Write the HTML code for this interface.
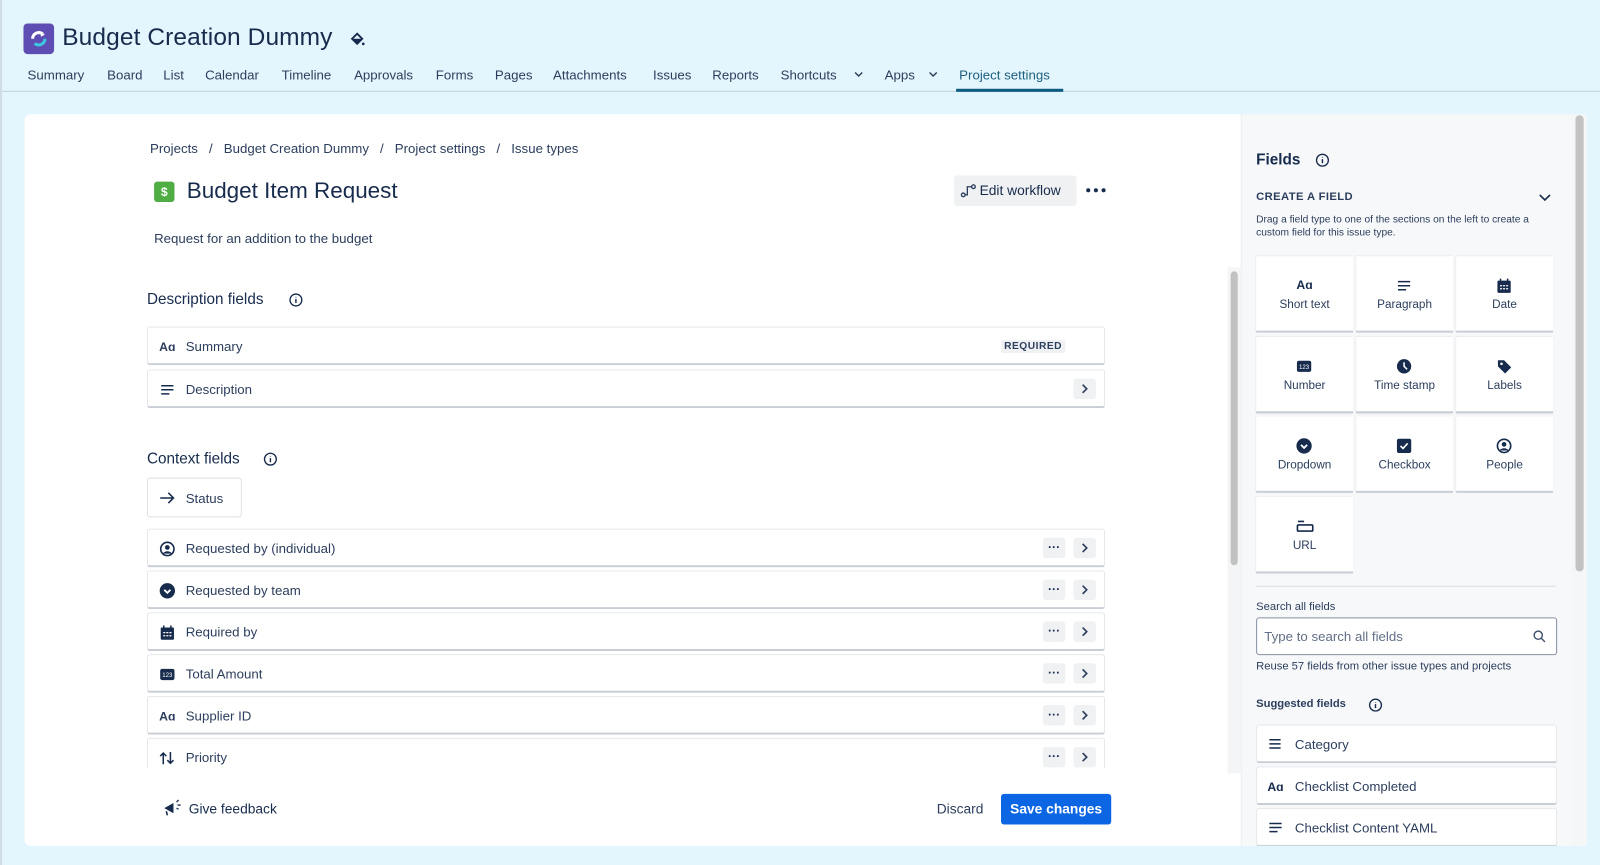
<!DOCTYPE html>
<html><head><meta charset="utf-8"><style>
*{box-sizing:border-box;margin:0;padding:0}
html,body{width:1600px;height:848px;overflow:hidden;background:#e4f6fd}
body{font-family:"Liberation Sans",sans-serif;color:#172b4d}
#w{position:absolute;left:0;top:0;width:1568px;height:831px;transform:scale(1.0204);transform-origin:0 0}
.abs{position:absolute}
.nav span{position:absolute;top:66px;font-size:13px;color:#2c3e5d}
.row{position:absolute;left:144px;width:939px;height:38px;background:#fff;border:1px solid #e4e6ea;border-bottom:2px solid #c9ced6;border-radius:3px;font-size:13px;color:#2c3e5d}
.row .ic{position:absolute;left:11px;top:11px;width:16px;height:16px}
.row .t{position:absolute;left:37px;top:11px}
.btn{position:absolute;top:8px;width:22px;height:20px;background:#f0f1f3;border-radius:3px;font-size:12px;text-align:center;line-height:18px;color:#172b4d;font-weight:bold}
.btn svg{margin-top:5px}
.tile{position:absolute;width:95px;height:75px;background:#fff;border-bottom:2px solid #c9ced6;box-shadow:0 0 1px #c9ced6;font-size:11.5px;color:#2c3e5d;text-align:center}
.tile svg{position:absolute;left:39px;top:21px}
.tile .l{position:absolute;left:0;right:0;top:42px}
.sug{position:absolute;left:1231px;width:295px;height:38px;background:#fff;border:1px solid #e4e6ea;border-bottom:2px solid #c9ced6;border-radius:3px;font-size:13px;color:#2c3e5d}
.sug .t{position:absolute;left:37px;top:11px}
</style></head><body><div id="w">
<div class="abs" style="left:23px;top:23px;width:30px;height:30px;background:#5e4db2;border-radius:4px"></div>
<svg class="abs" style="left:27px;top:27px" width="22" height="22" viewBox="0 0 22 22"><path d="M5 11a6 6 0 0 1 10-4.5" stroke="#fff" stroke-width="3" fill="none"/><path d="M17 11a6 6 0 0 1-10 4.5" stroke="#3fc6e0" stroke-width="3" fill="none"/><path d="M13 4l4 3-4 2z" fill="#fff"/></svg>
<div class="abs" style="left:61px;top:23px;font-size:24px;color:#172b4d;letter-spacing:.1px">Budget Creation Dummy</div>
<svg class="abs" style="left:342px;top:30px" width="16" height="16" viewBox="0 0 16 16"><path d="M3 8l5-5 5 5-5 5z" fill="none" stroke="#172b4d" stroke-width="1.8"/><path d="M3 8h10l-5 5z" fill="#172b4d"/><circle cx="14" cy="13" r="1.3" fill="#172b4d"/></svg>
<div class="nav">
<span style="left:27px">Summary</span><span style="left:105px">Board</span><span style="left:160px">List</span><span style="left:201px">Calendar</span><span style="left:276px">Timeline</span><span style="left:347px">Approvals</span><span style="left:427px">Forms</span><span style="left:485px">Pages</span><span style="left:542px">Attachments</span><span style="left:640px">Issues</span><span style="left:698px">Reports</span><span style="left:765px">Shortcuts</span><span style="left:867px">Apps</span><span style="left:940px;color:#1f5f7f">Project settings</span>
</div>
<svg class="abs" style="left:837px;top:70px" width="9" height="6"><path d="M1 1l3.5 3.5L8 1" fill="none" stroke="#2c3e5d" stroke-width="1.4"/></svg>
<svg class="abs" style="left:910px;top:70px" width="9" height="6"><path d="M1 1l3.5 3.5L8 1" fill="none" stroke="#2c3e5d" stroke-width="1.4"/></svg>
<div class="abs" style="left:0;top:89px;width:1600px;height:1px;background:#bfd3db"></div>
<div class="abs" style="left:937px;top:87px;width:105px;height:3px;background:#0c5b80"></div>
<div class="abs" style="left:0;top:0;width:2px;height:848px;background:#d0dde3"></div>

<div class="abs" style="left:24px;top:112px;width:1192px;height:717px;background:#fff;border-radius:6px 0 0 6px"></div>
<div class="abs" style="left:1216px;top:112px;width:324px;height:717px;background:#f7f8f9;border-left:1px solid #eceef0"></div>
<div class="abs" style="left:1540px;top:112px;width:15px;height:717px;background:#f5f6f7"></div>
<div class="abs" style="left:1544px;top:113px;width:8px;height:447px;background:#c2c2c2;border-radius:4px"></div>
<div class="abs" style="left:1203px;top:262px;width:13px;height:496px;background:#f4f5f6"></div>
<div class="abs" style="left:1206px;top:266px;width:7px;height:288px;background:#c2c2c2;border-radius:4px"></div>

<div class="abs" style="left:147px;top:138px;font-size:13px;color:#2c3e5d">Projects &nbsp;&nbsp;/&nbsp;&nbsp; Budget Creation Dummy &nbsp;&nbsp;/&nbsp;&nbsp; Project settings &nbsp;&nbsp;/&nbsp;&nbsp; Issue types</div>
<div class="abs" style="left:151px;top:178px;width:20px;height:20px;background:#4fad44;border-radius:3px;color:#fff;font-size:12px;font-weight:bold;text-align:center;line-height:20px">$</div>
<div class="abs" style="left:183px;top:174px;font-size:22px;color:#172b4d">Budget Item Request</div>
<div class="abs" style="left:935px;top:172px;width:120px;height:30px;background:#f0f1f3;border-radius:3px;font-size:13.5px;line-height:30px;padding-left:25px;color:#172b4d">Edit workflow</div>
<svg class="abs" style="left:941px;top:180px" width="16" height="14" viewBox="0 0 16 14"><circle cx="3" cy="11" r="1.8" fill="none" stroke="#2c3e5d" stroke-width="1.3"/><circle cx="13" cy="3" r="1.8" fill="none" stroke="#2c3e5d" stroke-width="1.3"/><path d="M4.5 11h2.5V3h4" fill="none" stroke="#2c3e5d" stroke-width="1.3"/></svg>
<svg class="abs" style="left:1064px;top:184px" width="20" height="5"><circle cx="2.5" cy="2.5" r="2" fill="#172b4d"/><circle cx="10" cy="2.5" r="2" fill="#172b4d"/><circle cx="17.5" cy="2.5" r="2" fill="#172b4d"/></svg>
<div class="abs" style="left:151px;top:226px;font-size:13px;color:#2c3e5d">Request for an addition to the budget</div>

<div class="abs" style="left:144px;top:285px;font-size:15px;color:#172b4d">Description fields</div>
<svg class="abs" style="left:283px;top:287px" width="14" height="14"><circle cx="7" cy="7" r="5.8" fill="none" stroke="#172b4d" stroke-width="1.3"/><path d="M7 6v4M7 4v.5" stroke="#172b4d" stroke-width="1.4"/></svg>
<div class="row" style="top:320px"><span class="ic" style="font-size:12px;font-weight:bold;top:12px">Aɑ</span><span class="t">Summary</span><span style="position:absolute;left:836px;top:12px;background:#f0f1f3;border-radius:2px;padding:1px 3px;font-size:10px;font-weight:bold;letter-spacing:.5px;color:#2c3e5d">REQUIRED</span></div>
<div class="row" style="top:362px"><svg class="ic" viewBox="0 0 16 16"><path d="M2 4h12M2 8h12M2 12h8" stroke="#172b4d" stroke-width="1.5"/></svg><span class="t">Description</span><span class="btn" style="left:907px"><svg width="8" height="10"><path d="M2 1l4 4-4 4" fill="none" stroke="#2c3e5d" stroke-width="1.6"/></svg></span></div>

<div class="abs" style="left:144px;top:441px;font-size:15px;color:#172b4d">Context fields</div>
<svg class="abs" style="left:258px;top:443px" width="14" height="14"><circle cx="7" cy="7" r="5.8" fill="none" stroke="#172b4d" stroke-width="1.3"/><path d="M7 6v4M7 4v.5" stroke="#172b4d" stroke-width="1.4"/></svg>
<div class="abs" style="left:144px;top:468px;width:93px;height:39px;border:1px solid #dfe1e5;border-radius:3px;font-size:13px;color:#2c3e5d"><svg style="position:absolute;left:11px;top:11px" width="16" height="16"><path d="M1 8h13M9 3l5 5-5 5" fill="none" stroke="#172b4d" stroke-width="1.5"/></svg><span style="position:absolute;left:37px;top:12px">Status</span></div>

<div style="position:absolute;left:0;top:0;width:1200px;height:753px;overflow:hidden">
<div class="row" style="top:518px"><svg class="ic" viewBox="0 0 16 16"><circle cx="8" cy="8" r="6.5" fill="none" stroke="#172b4d" stroke-width="1.6"/><circle cx="8" cy="6.5" r="2.3" fill="#172b4d"/><path d="M3.5 12.5c2-3 7-3 9 0" fill="#172b4d"/></svg><span class="t">Requested by (individual)</span><span class="btn" style="left:877px">···</span><span class="btn" style="left:907px"><svg width="8" height="10"><path d="M2 1l4 4-4 4" fill="none" stroke="#2c3e5d" stroke-width="1.6"/></svg></span></div>
<div class="row" style="top:559px"><svg class="ic" viewBox="0 0 16 16"><circle cx="8" cy="8" r="7.5" fill="#172b4d"/><path d="M5 7l3 3 3-3" fill="none" stroke="#fff" stroke-width="1.8"/></svg><span class="t">Requested by team</span><span class="btn" style="left:877px">···</span><span class="btn" style="left:907px"><svg width="8" height="10"><path d="M2 1l4 4-4 4" fill="none" stroke="#2c3e5d" stroke-width="1.6"/></svg></span></div>
<div class="row" style="top:600px"><svg class="ic" viewBox="0 0 16 16"><rect x="1.5" y="3" width="13" height="12" rx="1" fill="#172b4d"/><path d="M4.5 1v3M11.5 1v3" stroke="#172b4d" stroke-width="1.5"/><path d="M4 8h2M7 8h2M10 8h2M4 11h2M7 11h2M10 11h2" stroke="#fff" stroke-width="1.2"/></svg><span class="t">Required by</span><span class="btn" style="left:877px">···</span><span class="btn" style="left:907px"><svg width="8" height="10"><path d="M2 1l4 4-4 4" fill="none" stroke="#2c3e5d" stroke-width="1.6"/></svg></span></div>
<div class="row" style="top:641px"><svg class="ic" viewBox="0 0 16 16"><rect x="1" y="2.5" width="14" height="11" rx="2" fill="#172b4d"/><text x="8" y="10.5" font-size="6" fill="#fff" text-anchor="middle" font-family="Liberation Sans">123</text></svg><span class="t">Total Amount</span><span class="btn" style="left:877px">···</span><span class="btn" style="left:907px"><svg width="8" height="10"><path d="M2 1l4 4-4 4" fill="none" stroke="#2c3e5d" stroke-width="1.6"/></svg></span></div>
<div class="row" style="top:682px"><span class="ic" style="font-size:12px;font-weight:bold;top:12px">Aɑ</span><span class="t">Supplier ID</span><span class="btn" style="left:877px">···</span><span class="btn" style="left:907px"><svg width="8" height="10"><path d="M2 1l4 4-4 4" fill="none" stroke="#2c3e5d" stroke-width="1.6"/></svg></span></div>
<div class="row" style="top:723px"><svg class="ic" viewBox="0 0 16 16"><path d="M4 14V3M1 6l3-3 3 3M11 2v11M8 10l3 3 3-3" fill="none" stroke="#172b4d" stroke-width="1.5"/></svg><span class="t">Priority</span><span class="btn" style="left:877px">···</span><span class="btn" style="left:907px"><svg width="8" height="10"><path d="M2 1l4 4-4 4" fill="none" stroke="#2c3e5d" stroke-width="1.6"/></svg></span></div>
</div>

<svg class="abs" style="left:159px;top:783px" width="20" height="18" viewBox="0 0 20 18"><path d="M2 9l9-5v10z" fill="#172b4d"/><path d="M4 12l1 4" stroke="#172b4d" stroke-width="1.5"/><path d="M14 3l2-2M15 6h3M14 9l2 1" stroke="#172b4d" stroke-width="1.3"/></svg>
<div class="abs" style="left:185px;top:785px;font-size:13.5px;color:#172b4d">Give feedback</div>
<div class="abs" style="left:918px;top:785px;font-size:13.5px;color:#2c3e5d">Discard</div>
<div class="abs" style="left:981px;top:778px;width:108px;height:30px;background:#0c66e4;border-radius:3px;color:#fff;font-size:13.5px;font-weight:bold;text-align:center;line-height:30px">Save changes</div>

<div class="abs" style="left:1231px;top:148px;font-size:15px;font-weight:bold;color:#172b4d">Fields</div>
<svg class="abs" style="left:1289px;top:150px" width="14" height="14"><circle cx="7" cy="7" r="5.8" fill="none" stroke="#172b4d" stroke-width="1.3"/><path d="M7 6v4M7 4v.5" stroke="#172b4d" stroke-width="1.4"/></svg>
<div class="abs" style="left:1231px;top:187px;font-size:11px;font-weight:bold;color:#2c3e5d;letter-spacing:.4px">CREATE A FIELD</div>
<svg class="abs" style="left:1508px;top:189px" width="12" height="9"><path d="M1 2l5 5 5-5" fill="none" stroke="#172b4d" stroke-width="1.6"/></svg>
<div class="abs" style="left:1231px;top:209px;width:300px;font-size:10px;line-height:13px;color:#2c3e5d">Drag a field type to one of the sections on the left to create a custom field for this issue type.</div>

<div class="tile" style="left:1231px;top:251px"><span style="position:absolute;left:0;right:0;top:21px;font-size:12px;font-weight:bold;color:#172b4d">Aɑ</span><span class="l">Short text</span></div>
<div class="tile" style="left:1329px;top:251px"><svg width="16" height="16" viewBox="0 0 16 16"><path d="M2 4h12M2 8h12M2 12h8" stroke="#172b4d" stroke-width="1.5"/></svg><span class="l">Paragraph</span></div>
<div class="tile" style="left:1427px;top:251px"><svg width="16" height="16" viewBox="0 0 16 16"><rect x="1.5" y="3" width="13" height="12" rx="1" fill="#172b4d"/><path d="M4.5 1v3M11.5 1v3" stroke="#172b4d" stroke-width="1.5"/><path d="M4 8h2M7 8h2M10 8h2M4 11h2M7 11h2M10 11h2" stroke="#fff" stroke-width="1.2"/></svg><span class="l">Date</span></div>
<div class="tile" style="left:1231px;top:330px"><svg width="16" height="16" viewBox="0 0 16 16"><rect x="1" y="2.5" width="14" height="11" rx="2" fill="#172b4d"/><text x="8" y="10.5" font-size="6" fill="#fff" text-anchor="middle" font-family="Liberation Sans">123</text></svg><span class="l">Number</span></div>
<div class="tile" style="left:1329px;top:330px"><svg width="16" height="16" viewBox="0 0 16 16"><circle cx="8" cy="8" r="7" fill="#172b4d"/><path d="M8 4v4l3 3" fill="none" stroke="#fff" stroke-width="1.5"/></svg><span class="l">Time stamp</span></div>
<div class="tile" style="left:1427px;top:330px"><svg width="16" height="16" viewBox="0 0 16 16"><path d="M2 2h6l7 7-6 6-7-7z" fill="#172b4d"/><circle cx="5.5" cy="5.5" r="1.3" fill="#fff"/></svg><span class="l">Labels</span></div>
<div class="tile" style="left:1231px;top:408px"><svg width="16" height="16" viewBox="0 0 16 16"><circle cx="8" cy="8" r="7.5" fill="#172b4d"/><path d="M5 7l3 3 3-3" fill="none" stroke="#fff" stroke-width="1.8"/></svg><span class="l">Dropdown</span></div>
<div class="tile" style="left:1329px;top:408px"><svg width="16" height="16" viewBox="0 0 16 16"><rect x="1" y="1" width="14" height="14" rx="2" fill="#172b4d"/><path d="M4.5 8l2.5 2.5 4.5-5" fill="none" stroke="#fff" stroke-width="1.6"/></svg><span class="l">Checkbox</span></div>
<div class="tile" style="left:1427px;top:408px"><svg width="16" height="16" viewBox="0 0 16 16"><circle cx="8" cy="8" r="6.5" fill="none" stroke="#172b4d" stroke-width="1.6"/><circle cx="8" cy="6.5" r="2.3" fill="#172b4d"/><path d="M3.5 12.5c2-3 7-3 9 0" fill="#172b4d"/></svg><span class="l">People</span></div>
<div class="tile" style="left:1231px;top:487px"><svg width="18" height="16" viewBox="0 0 18 16"><path d="M2 3h6" stroke="#172b4d" stroke-width="1.5"/><rect x="1.5" y="6.5" width="15" height="6" rx="1" fill="none" stroke="#172b4d" stroke-width="1.6"/></svg><span class="l">URL</span></div>

<div class="abs" style="left:1231px;top:574px;width:294px;height:1px;background:#d9dce1"></div>
<div class="abs" style="left:1231px;top:589px;font-size:11px;color:#2c3e5d">Search all fields</div>
<div class="abs" style="left:1231px;top:605px;width:295px;height:37px;background:#fff;border:1px solid #8590a2;border-radius:3px;font-size:13px;color:#626f86;padding:10px 0 0 7px">Type to search all fields</div>
<svg class="abs" style="left:1502px;top:617px" width="13" height="13"><circle cx="5.5" cy="5.5" r="4" fill="none" stroke="#44546f" stroke-width="1.4"/><path d="M8.5 8.5l3.5 3.5" stroke="#44546f" stroke-width="1.4"/></svg>
<div class="abs" style="left:1231px;top:647px;font-size:11px;color:#2c3e5d">Reuse 57 fields from other issue types and projects</div>
<div class="abs" style="left:1231px;top:684px;font-size:11px;font-weight:bold;color:#2c3e5d">Suggested fields</div>
<svg class="abs" style="left:1341px;top:684px" width="14" height="14"><circle cx="7" cy="7" r="5.8" fill="none" stroke="#172b4d" stroke-width="1.3"/><path d="M7 6v4M7 4v.5" stroke="#172b4d" stroke-width="1.4"/></svg>
<div style="position:absolute;left:0;top:0;width:1568px;height:829px;overflow:hidden">
<div class="sug" style="top:710px"><svg style="position:absolute;left:11px;top:11px" width="14" height="14"><path d="M1 3h11M1 7h11M1 11h11" stroke="#172b4d" stroke-width="1.5"/></svg><span class="t">Category</span></div>
<div class="sug" style="top:751px"><span style="position:absolute;left:10px;top:12px;font-size:12px;font-weight:bold;color:#172b4d">Aɑ</span><span class="t">Checklist Completed</span></div>
<div class="sug" style="top:792px"><svg style="position:absolute;left:11px;top:11px" width="14" height="14"><path d="M1 3h12M1 7h12M1 11h8" stroke="#172b4d" stroke-width="1.5"/></svg><span class="t">Checklist Content YAML</span></div>
</div>
</div></body></html>
